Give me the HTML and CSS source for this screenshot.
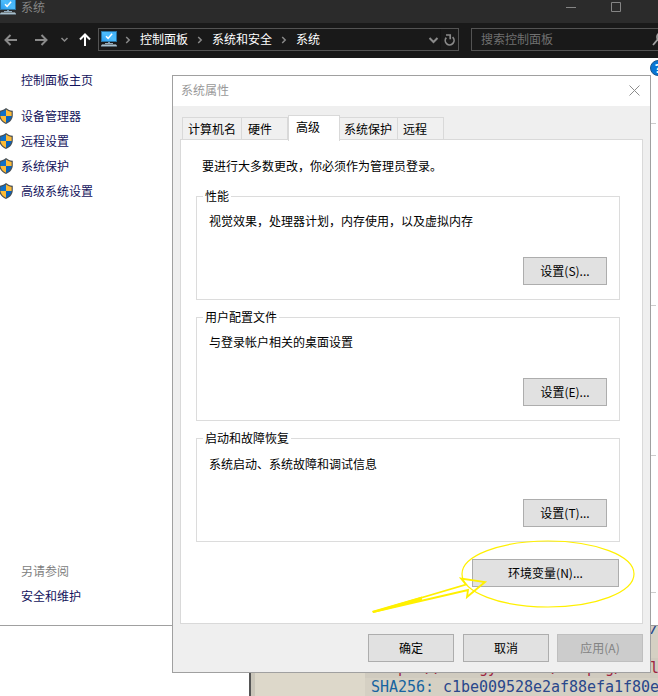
FILE: index.html
```html
<!DOCTYPE html>
<html lang="zh-CN">
<head>
<meta charset="utf-8">
<title>系统</title>
<link rel="stylesheet" href="styles.css">
</head>
<body>
<svg class="defs" width="0" height="0">
  <defs>
    <linearGradient id="screen" x1="0" y1="1" x2="1" y2="0"><stop offset="0" stop-color="#2a9cf0"/><stop offset=".5" stop-color="#4dbcfb"/><stop offset="1" stop-color="#3fb0f8"/></linearGradient>
    <symbol id="pc" viewBox="0 0 16 16">
      <rect x="0" y="0" width="16" height="11" fill="#2872a0"/>
      <rect x="1" y="1" width="14" height="9" fill="url(#screen)"/>
      <path d="M5 5.3l2.100 2.100 4-4.700" fill="none" stroke="#fff" stroke-width="1.500"/>
      <path d="M7 11h2v1.500H7z" fill="#7c97a8"/><path d="M4 12h8v1H4z" fill="#93aabb"/>
      <path d="M1 13.500h14l1 1.500H0z" fill="#c4dbe8"/><path d="M0 14.600h16v1H0z" fill="#7f98a8"/>
    </symbol>
    <symbol id="shield" viewBox="0 0 14 16">
      <path d="M7 0C5 1.700 3 2.500 .2 2.800v4.700C.4 11.700 3 14.300 7 16 11 14.300 13.600 11.700 13.800 7.500V2.800C11 2.500 9 1.700 7 0z" fill="#4b5257"/>
      <path d="M7 1.600V8H1.400V3.900C3.800 3.500 5.400 2.800 7 1.600z" fill="#0f70c9"/>
      <path d="M7 1.600V8h5.600V3.900C10.200 3.500 8.600 2.800 7 1.600z" fill="#fdbb36"/>
      <path d="M1.400 8H7v6.700C3.800 13.200 1.800 11 1.400 8z" fill="#fdbb36"/>
      <path d="M12.600 8H7v6.700c3.200-1.500 5.200-3.700 5.600-6.700z" fill="#0863be"/>
    </symbol>
    <symbol id="crumb" viewBox="0 0 6 8"><path d="M1.200 1l3 3-3 3" fill="none" stroke="#8a8a8a" stroke-width="1.500"/></symbol>
  </defs>
</svg>
<div class="desktop">
  <header class="titlebar">
    <svg class="pc"><use href="#pc"/></svg>
    <span class="title">系统</span>
    <svg class="caption" width="90" height="14" viewBox="0 0 90 14" fill="none" stroke="#858585"><path d="M0 7.500h10M45.500 2.500h9v9h-9zM91 2l10 10M91 12l10-10"/></svg>
  </header>
  <nav class="navbar">
    <svg class="arrows" width="98" height="35" viewBox="0 0 98 35" fill="none" stroke="#8a8a8a" stroke-width="2">
      <path d="M17 17H6M10.500 12l-5 5 5 5M35 17h11M41.500 12l5 5-5 5"/>
      <path d="M61.500 15l3 3 3-3" stroke-width="1.500"/>
      <path d="M85 23V12M80 16.500l5-5 5 5" stroke="#fff"/>
    </svg>
    <div class="address">
      <svg class="pc"><use href="#pc"/></svg>
      <svg class="crumb"><use href="#crumb"/></svg><span class="c1">控制面板</span>
      <svg class="crumb"><use href="#crumb"/></svg><span class="c2">系统和安全</span>
      <svg class="crumb"><use href="#crumb"/></svg><span>系统</span>
      <svg class="tools" width="30" height="21" viewBox="0 0 30 21" fill="none" stroke="#8a8a8a"><path d="M1.500 9l4 4 4-4" stroke-width="2"/><path d="M12.500 0v21" stroke="#141414"/><path d="M18.300 8.600a4.400 4.400 0 1 0 6.300-.4M18 6h4.200v4.200" stroke-width="1.700"/></svg>
    </div>
    <div class="search"><span>搜索控制面板</span><svg width="6" height="14" viewBox="0 0 6 14" fill="none" stroke="#a0a0a0" stroke-width="1.800"><path d="M1 12l5-6"/><circle cx="9" cy="4" r="4"/></svg></div>
  </nav>
  <main class="panel">
    <aside class="side">
      <a class="home">控制面板主页</a>
      <a class="task"><svg class="shield"><use href="#shield"/></svg>设备管理器</a>
      <a class="task"><svg class="shield"><use href="#shield"/></svg>远程设置</a>
      <a class="task"><svg class="shield"><use href="#shield"/></svg>系统保护</a>
      <a class="task"><svg class="shield"><use href="#shield"/></svg>高级系统设置</a>
      <p class="also">另请参阅</p>
      <a class="security">安全和维护</a>
    </aside>
    <div class="rules"><span class="help">?</span><hr><hr><hr><hr></div>
  </main>

  <section class="terminal">
    <div class="gutter"></div>
    <div class="code">
      <div class="path">7</div>
      <div class="url">https://www.gyan.dev/ffmpeg/buil</div>
      <div class="hash"><b>SHA256:</b> c1be009528e2af88efa1f80e</div>
    </div>
  </section>

  <section class="dialog">
    <div class="dialog-title"><span>系统属性</span><svg width="11" height="11" viewBox="0 0 11 11" stroke="#8c8c8c"><path d="M.5.5l10 10M.5 10.500l10-10"/></svg></div>
    <div class="tabs"><span class="tab t1">计算机名</span><span class="tab t2">硬件</span><span class="tab active">高级</span><span class="tab t4">系统保护</span><span class="tab t5">远程</span></div>
    <div class="page">
      <p class="note">要进行大多数更改，你必须作为管理员登录。</p>
      <div class="group"><h2>性能</h2><p>视觉效果，处理器计划，内存使用，以及虚拟内存</p><button>设置(S)...</button></div>
      <div class="group"><h2>用户配置文件</h2><p>与登录帐户相关的桌面设置</p><button>设置(E)...</button></div>
      <div class="group startup"><h2>启动和故障恢复</h2><p>系统启动、系统故障和调试信息</p><button>设置(T)...</button></div>
      <button class="env">环境变量(N)...</button>
    </div>
    <div class="actions"><button>确定</button><button>取消</button><button class="disabled" disabled>应用(A)</button></div>
  </section>
  <svg class="markup" width="270" height="80" viewBox="0 0 270 80" fill="none" stroke="#fff000">
    <ellipse cx="178" cy="39" rx="86" ry="33" stroke-width="1.200"/>
    <path d="M3 77L96 49.500 91 43.500l24 3.500-18 15 1-7L3 77z" stroke-width="1.800"/>
    <path d="M2 76l50-14.500v4L3 78z" fill="#fff000" stroke="none"/>
  </svg>
</div>
</body>
</html>
```
FILE: styles.css
```css
* { box-sizing: border-box; }
body { margin: 0; background: #fff; font: 12px/16px "Noto Sans CJK SC", sans-serif; color: #000; overflow: hidden; }
p, h2 { margin: 0; font-size: 12px; font-weight: 400; }
svg { display: block; flex: none; }
.defs { position: absolute; }
.desktop { position: relative; width: 658px; height: 696px; overflow: hidden; display: flex; flex-direction: column; }
.pc { width: 16px; height: 16px; }
.titlebar { height: 23px; background: #2b2b2b; display: flex; align-items: flex-start; color: #858585; }
.titlebar .pc { margin-top: -1px; }
.title { margin-left: 5px; line-height: 14px; }
.caption { margin-left: auto; margin-right: 2px; }
.navbar { height: 35px; background: #191919; display: flex; color: #fff; }
.address { width: 361px; height: 23px; margin-top: 5px; border: 1px solid #535353; display: flex; align-items: center; padding-left: 2px; }
.address .pc { margin-top: -1px; }
.address span, .search span { margin-bottom: 2px; }
.crumb { width: 6px; height: 8px; margin: 0 9px 0 8px; }
.c1, .c2 { margin-right: 1px; }
.tools { margin-left: auto; }
.search { width: 187px; height: 23px; margin: 5px 0 0 12px; border: 1px solid #535353; border-right: 0; display: flex; align-items: center; justify-content: space-between; padding-left: 9px; color: #707070; }
.panel { height: 568px; border-bottom: 1px solid #a0a0a0; display: flex; justify-content: space-between; }
.side { width: 172px; display: flex; flex-direction: column; color: #13135c; }
.home { margin: 14px 0 15px 21px; height: 16px; }
.task { display: flex; align-items: center; height: 25px; }
.shield { width: 14px; height: 16px; margin: 0 8px 0 -1px; }
.also { color: #808080; margin: 360px 0 9px 21px; }
.security { margin-left: 21px; }
.rules { width: 8px; }
.help { display: block; width: 16px; height: 16px; margin-top: 2px; border-radius: 50%; border: 1px solid #1c5688; background: #0875d4; color: #fff; font: bold 13px/14px "Open Sans", sans-serif; padding-left: 4px; }
.rules hr { margin: 0 2px 0 0; border: 0; height: 1px; background: #ccc; }
.rules hr:nth-of-type(1) { margin-top: 47px; }
.rules hr:nth-of-type(2) { margin-top: 181px; }
.rules hr:nth-of-type(3) { margin-top: 149px; }
.rules hr:nth-of-type(4) { margin-top: 136px; }
.terminal { position: absolute; left: 249px; top: 625px; width: 409px; height: 71px; background: #ddd8ca; border-left: 2px solid #555; border-top: 1px solid #999; display: flex; overflow: hidden; }
.gutter { width: 114px; flex: none; border-left: 4px solid #cac6ba; }
.code { flex: 1; min-width: 0; background: #d5d0c3; font: 15px/18px "DejaVu Sans Mono", monospace; letter-spacing: -.03px; display: flex; flex-direction: column; }
.code > div { height: 18px; flex: none; padding-left: 6px; white-space: pre; }
.path { margin-top: -6px; text-align: right; color: #25478d; font-style: italic; }
.code .url { height: 20px; margin-top: 20px; line-height: 20px; background: #d0cbbf; color: #9e2440; }
.hash { color: #29478b; }
.hash b { font-weight: 400; color: #1764a0; }
.dialog { position: absolute; left: 172px; top: 75px; width: 479px; height: 598px; background: #efefef; border: 1px solid #a0a0a0; display: flex; flex-direction: column; }
.dialog-title { height: 30px; background: #fff; display: flex; justify-content: space-between; padding: 6px 10px 0 8px; color: #999; }
.dialog-title svg { margin-top: 3px; }
.tabs { height: 34px; display: flex; align-items: flex-end; padding-left: 9px; }
.tab { height: 23px; border: 1px solid #d9d9d9; border-bottom: 0; padding: 3px 0 0 5px; background: #f0f0f0; }
.t1 { width: 60px; }
.t2 { width: 47px; margin-left: -1px; padding-left: 6px; }
.active { width: 52px; height: 26px; margin-bottom: -1px; background: #fff; padding-left: 7px; padding-top: 3px; z-index: 1; }
.t4 { width: 57px; border-left: 0; border-right: 0; padding-left: 4px; }
.t5 { width: 47px; }
.page { width: 463px; height: 485px; margin: -1px 0 0 7px; border: 1px solid #d9d9d9; background: #fff; padding: 18px 22px 0 15px; display: flex; flex-direction: column; }
.note { margin-left: 6px; height: 38px; }
.group { height: 104px; margin-bottom: 17px; border: 1px solid #dcdcdc; padding: 0 12px 14px; display: flex; flex-direction: column; flex: none; }
.group h2 { align-self: flex-start; background: #fff; padding: 0 2px; margin: -9px 0 9px -6px; }
.startup h2 { margin-bottom: 10px; }
button { width: 84px; height: 28px; background: #e1e1e1; border: 1px solid #adadad; color: #000; font: inherit; padding: 0 0 1px; }
.group button { margin: auto 0 0 auto; }
.env { width: 147px; margin-left: auto; margin-right: 1px; flex: none; }
.actions { display: flex; gap: 9px; margin: 10px 7px 0 auto; }
.actions button { width: 86px; }
.actions .disabled { margin-left: -1px; background: #ccc; border-color: #bfbfbf; color: #838383; }
.markup { position: absolute; left: 370px; top: 535px; }
```
